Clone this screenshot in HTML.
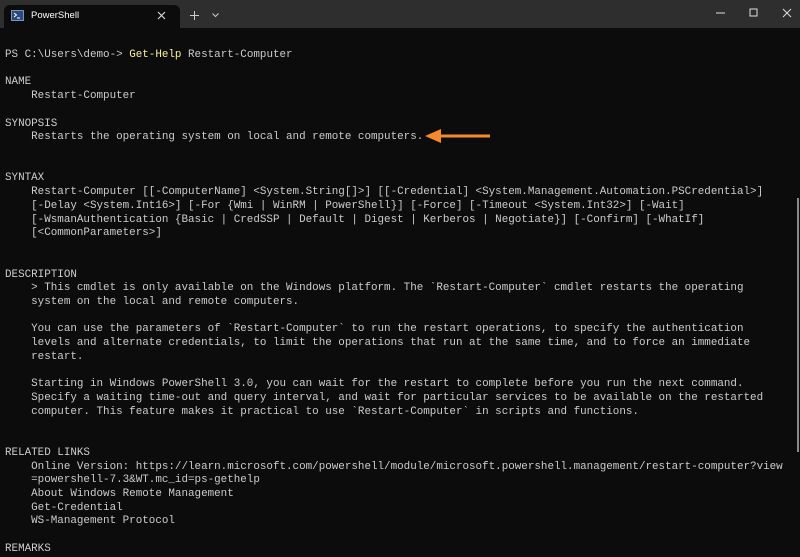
<!DOCTYPE html>
<html><head><meta charset="utf-8"><style>
html,body{margin:0;padding:0;width:800px;height:557px;overflow:hidden;background:#0c0c0c}
.tb{position:absolute;left:0;top:0;width:800px;height:28px;background:#2e2e2e}
.tab{position:absolute;left:4px;top:5px;width:176px;height:23px;background:#0c0c0c;border-radius:6px 6px 0 0}
.t{position:absolute;font-family:"Liberation Sans",sans-serif;font-size:9.5px;color:#fff}
pre{position:absolute;left:5px;top:49px;margin:0;font-family:"Liberation Mono",monospace;font-size:10.9px;line-height:13.72px;color:#cccccc;white-space:pre}
.y{color:#f9f1a5}
</style></head><body>
<div class="tb"></div>
<div class="tab"></div>
<svg style="position:absolute;left:11px;top:10px" width="13" height="11" viewBox="0 0 13 11"><rect x="0.5" y="0.5" width="12" height="10" fill="#2b4a7a" stroke="#8fb0e0" stroke-width="0.8"/><path d="M3 3l2.5 2-2.5 2M6 8h3" stroke="#fff" fill="none" stroke-width="1"/></svg>
<div class="t" style="left:31px;top:10px">PowerShell</div>
<svg style="position:absolute;left:157px;top:11px" width="9" height="9"><path d="M1 1l7 7M8 1l-7 7" stroke="#ddd" stroke-width="1.1"/></svg>
<svg style="position:absolute;left:190px;top:11px" width="9" height="9"><path d="M4.5 0v9M0 4.5h9" stroke="#ccc" stroke-width="1"/></svg>
<svg style="position:absolute;left:212px;top:13px" width="7" height="5"><path d="M0.5 0.5l3 3 3-3" stroke="#ccc" fill="none" stroke-width="1"/></svg>
<svg style="position:absolute;left:716px;top:12px" width="10" height="3"><path d="M0 1h9" stroke="#ddd" stroke-width="1"/></svg>
<svg style="position:absolute;left:749px;top:8px" width="10" height="10"><rect x="1" y="1" width="7" height="7" fill="none" stroke="#ddd" stroke-width="1"/></svg>
<svg style="position:absolute;left:782px;top:8px" width="10" height="10"><path d="M1 1l8 8M9 1l-8 8" stroke="#ddd" stroke-width="1"/></svg>
<div style="position:absolute;left:797px;top:198px;width:2px;height:254px;background:#8a8a8a"></div>
<svg style="position:absolute;left:424px;top:128px" width="68" height="16"><path d="M14 8H66" stroke="#f58a2c" stroke-width="3"/><path d="M1 8L17 1V15Z" fill="#f58a2c"/></svg>
<pre>PS C:\Users\demo-&gt; <span class="y">Get-Help</span> Restart-Computer

NAME
    Restart-Computer

SYNOPSIS
    Restarts the operating system on local and remote computers.


SYNTAX
    Restart-Computer [[-ComputerName] &lt;System.String[]&gt;] [[-Credential] &lt;System.Management.Automation.PSCredential&gt;]
    [-Delay &lt;System.Int16&gt;] [-For {Wmi | WinRM | PowerShell}] [-Force] [-Timeout &lt;System.Int32&gt;] [-Wait]
    [-WsmanAuthentication {Basic | CredSSP | Default | Digest | Kerberos | Negotiate}] [-Confirm] [-WhatIf]
    [&lt;CommonParameters&gt;]


DESCRIPTION
    &gt; This cmdlet is only available on the Windows platform. The `Restart-Computer` cmdlet restarts the operating
    system on the local and remote computers.

    You can use the parameters of `Restart-Computer` to run the restart operations, to specify the authentication
    levels and alternate credentials, to limit the operations that run at the same time, and to force an immediate
    restart.

    Starting in Windows PowerShell 3.0, you can wait for the restart to complete before you run the next command.
    Specify a waiting time-out and query interval, and wait for particular services to be available on the restarted
    computer. This feature makes it practical to use `Restart-Computer` in scripts and functions.


RELATED LINKS
    Online Version: https://learn.microsoft.com/powershell/module/microsoft.powershell.management/restart-computer?view
    =powershell-7.3&amp;WT.mc_id=ps-gethelp
    About Windows Remote Management
    Get-Credential
    WS-Management Protocol

REMARKS</pre>
</body></html>
